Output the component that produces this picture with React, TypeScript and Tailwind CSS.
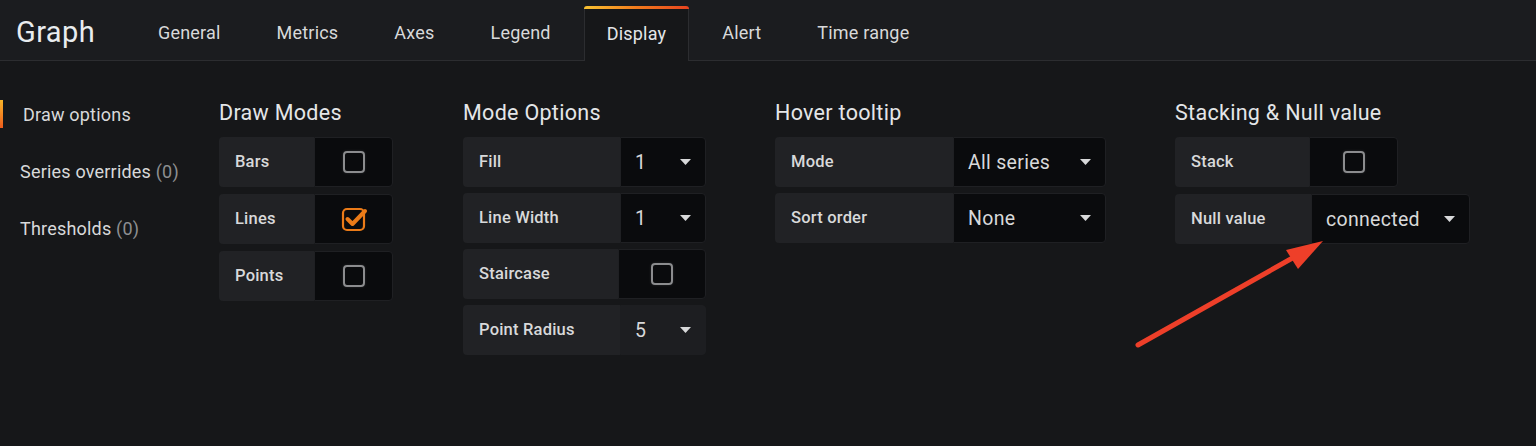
import React from "react";

const font = { fontFamily: "Roboto, 'Noto Sans', 'Liberation Sans', sans-serif" };

function Caret() {
  return (
    <svg width="11" height="6" viewBox="0 0 11 6" className="shrink-0">
      <path d="M0 0 L11 0 L5.5 6 Z" fill="#d8d9da" />
    </svg>
  );
}

function Check({ checked }: { checked?: boolean }) {
  if (checked) {
    return (
      <svg width="26" height="26" viewBox="0 0 26 26" className="overflow-visible">
        <rect x="2" y="3" width="21" height="21" rx="4" fill="none" stroke="#eb7b18" strokeWidth="2.2" />
        <path d="M6.5 13 L11.5 18 L24 5" fill="none" stroke="#eb7b18" strokeWidth="4" strokeLinecap="round" strokeLinejoin="round" />
      </svg>
    );
  }
  return <div className="w-[22px] h-[22px] rounded-[4px] border-2 border-[#8b8c8e] shadow-[0_0_3px_rgba(255,255,255,0.12)]" />;
}

function Label({ text, w }: { text: string; w: string }) {
  return (
    <div className={`${w} h-full flex items-center pl-4 bg-[#212225] rounded-l-[4px] text-[16.5px] tracking-[0.2px] font-medium text-[#d8d9da] shrink-0 whitespace-nowrap`}>
      {text}
    </div>
  );
}

function CheckRow({ label, lw, vw, checked }: { label: string; lw: string; vw: string; checked?: boolean }) {
  return (
    <div className="flex h-[50px]">
      <Label text={label} w={lw} />
      <div className={`${vw} h-full flex items-center justify-center bg-[#0a0b0d] rounded-r-[4px] border border-[#1f2023]`}>
        <Check checked={checked} />
      </div>
    </div>
  );
}

function SelectRow({ label, value, lw, vw, light }: { label: string; value: string; lw: string; vw: string; light?: boolean }) {
  return (
    <div className="flex h-[50px]">
      <Label text={label} w={lw} />
      <div
        className={`${vw} h-full flex items-center justify-between pl-[14px] pr-[14px] rounded-r-[4px] border ${
          light ? "bg-[#1d1e21] border-[#1d1e21]" : "bg-[#0a0b0d] border-[#1f2023]"
        }`}
      >
        <span className="text-[19.5px] tracking-[0.3px] text-[#d8d9da] pt-[2px]">{value}</span>
        <Caret />
      </div>
    </div>
  );
}

function Heading({ children }: { children: React.ReactNode }) {
  return <div className="text-[21.5px] tracking-[0.3px] leading-[25px] text-[#e4e6e8] mb-[12px] whitespace-nowrap">{children}</div>;
}

export default function App() {
  const tabs = ["General", "Metrics", "Axes", "Legend", "Display", "Alert", "Time range"];
  return (
    <div className="relative w-full min-h-[446px] bg-[#161719] overflow-hidden" style={font}>
      {/* Header */}
      <div className="h-[61px] bg-[#1b1c1f] border-b border-[#2c2d30] flex items-end">
        <div className="h-[60px] flex items-center pl-4 pt-[5px] text-[29px] tracking-[0.4px] text-[#e9ecef] w-[135px] shrink-0">Graph</div>
        <div className="flex items-end gap-[10px]">
          {tabs.map((t) =>
            t === "Display" ? (
              <div
                key={t}
                className="relative h-[55px] -mb-px px-[22px] flex items-center bg-[#161719] border-x border-[#2c2d30] rounded-t-[3px] text-[18px] tracking-[0.2px] text-[#e4e6e8]"
              >
                <div className="absolute left-[-1px] right-[-1px] top-0 h-[3px] rounded-t-[3px] bg-gradient-to-r from-[#f8c232] via-[#f27a1c] to-[#e8421f]" />
                <span>{t}</span>
              </div>
            ) : (
              <div key={t} className="h-[55px] px-[23px] flex items-center text-[18px] tracking-[0.2px] text-[#d8d9da]">
                <span>{t}</span>
              </div>
            )
          )}
        </div>
      </div>

      {/* Body */}
      <div className="flex pt-[39px]">
        {/* Sidebar */}
        <div className="w-[219px] shrink-0 flex flex-col gap-[29px] text-[18px] tracking-[0.2px]">
          <div className="h-[28px] flex items-center">
            <div className="w-[3px] h-[28px] bg-gradient-to-b from-[#f8b42a] to-[#ec5a1c]" />
            <span className="pl-[20px] text-[#d8d9da]">Draw options</span>
          </div>
          <div className="h-[28px] flex items-center pl-[20px] text-[#d8d9da]">
            Series overrides&nbsp;<span className="text-[#8e8f91]">(0)</span>
          </div>
          <div className="h-[28px] flex items-center pl-[20px] text-[#d8d9da]">
            Thresholds&nbsp;<span className="text-[#8e8f91]">(0)</span>
          </div>
        </div>

        <div className="flex gap-[69px]">
          <div className="w-[175px] shrink-0">
            <Heading>Draw Modes</Heading>
            <div className="flex flex-col gap-[7px]">
              <CheckRow label="Bars" lw="w-[95px]" vw="w-[79px]" />
              <CheckRow label="Lines" lw="w-[95px]" vw="w-[79px]" checked />
              <CheckRow label="Points" lw="w-[95px]" vw="w-[79px]" />
            </div>
          </div>

          <div className="w-[243px] shrink-0">
            <Heading>Mode Options</Heading>
            <div className="flex flex-col gap-[6px]">
              <SelectRow label="Fill" value="1" lw="w-[157px]" vw="w-[86px]" />
              <SelectRow label="Line Width" value="1" lw="w-[157px]" vw="w-[86px]" />
              <CheckRow label="Staircase" lw="w-[155px]" vw="w-[88px]" />
              <SelectRow label="Point Radius" value="5" lw="w-[157px]" vw="w-[86px]" light />
            </div>
          </div>

          <div className="w-[331px] shrink-0">
            <Heading>Hover tooltip</Heading>
            <div className="flex flex-col gap-[6px]">
              <SelectRow label="Mode" value="All series" lw="w-[178px]" vw="w-[153px]" />
              <SelectRow label="Sort order" value="None" lw="w-[178px]" vw="w-[153px]" />
            </div>
          </div>

          <div className="w-[296px] shrink-0">
            <Heading>Stacking &amp; Null value</Heading>
            <div className="flex flex-col gap-[7px]">
              <CheckRow label="Stack" lw="w-[134px]" vw="w-[89px]" />
              <SelectRow label="Null value" value="connected" lw="w-[136px]" vw="w-[159px]" />
            </div>
          </div>
        </div>
      </div>

      {/* Annotation arrow */}
      <svg className="absolute left-0 top-0 pointer-events-none" width="1536" height="446" viewBox="0 0 1536 446">
        <line x1="1138" y1="345" x2="1296" y2="256" stroke="#ee3f29" strokeWidth="5" strokeLinecap="round" />
        <polygon points="1323,241 1286,250 1298,269" fill="#ee3f29" />
      </svg>
    </div>
  );
}
